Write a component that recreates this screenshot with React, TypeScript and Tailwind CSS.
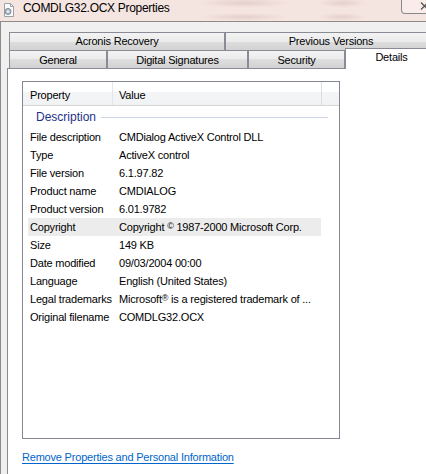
import React from "react";

const tabBg =
  "bg-[linear-gradient(to_bottom,#f3f3f3_0%,#ebebeb_50%,#dedede_50%,#d2d2d2_100%)]";

function TitleIcon() {
  return (
    <svg width="14" height="14" viewBox="0 0 14 14">
      <path d="M2.5 0.5h6l3 3v10h-9z" fill="#fbfbfb" stroke="#9aa3ad" />
      <path d="M8.5 0.5v3h3" fill="none" stroke="#9aa3ad" />
      <circle cx="6" cy="8.5" r="3" fill="#b9c3cf" stroke="#7c8794" />
      <circle cx="6" cy="8.5" r="1.1" fill="#f4f6f8" />
    </svg>
  );
}

const rows: [string, React.ReactNode][] = [
  ["File description", "CMDialog ActiveX Control DLL"],
  ["Type", "ActiveX control"],
  ["File version", "6.1.97.82"],
  ["Product name", "CMDIALOG"],
  ["Product version", "6.01.9782"],
  [
    "Copyright",
    <>
      Copyright <span className="text-[9px] align-[2px]">©</span> 1987-2000 Microsoft Corp.
    </>,
  ],
  ["Size", "149 KB"],
  ["Date modified", "09/03/2004 00:00"],
  ["Language", "English (United States)"],
  [
    "Legal trademarks",
    <>
      Microsoft<span className="text-[9px] align-[2px]">®</span> is a registered trademark of ...
    </>,
  ],
  ["Original filename", "COMDLG32.OCX"],
];

export default function App() {
  return (
    <div className="w-[426px] h-[474px] overflow-hidden bg-[#f0f0f0] text-black font-['Liberation_Sans',Arial,sans-serif] text-[11px] leading-[15px] tracking-[-0.2px]">
      {/* Title bar */}
      <div className="h-[21px] flex items-start bg-[radial-gradient(ellipse_46px_5px_at_244px_3px,#e4cfcb,transparent),radial-gradient(ellipse_46px_4px_at_244px_17px,#e4cfcb,transparent),radial-gradient(ellipse_24px_5px_at_342px_3px,#e4cfcb,transparent),radial-gradient(ellipse_24px_4px_at_342px_17px,#e4cfcb,transparent),linear-gradient(#f5e5e1,#f5e5e1)]">
        <div className="ml-[2px] mt-[3px] w-[14px] h-[14px]">
          <TitleIcon />
        </div>
        <div className="ml-[7px] mt-[1px] text-[12px] tracking-[-0.3px] text-black">
          COMDLG32.OCX Properties
        </div>
        <div className="ml-auto mr-[-6px] w-[31px] h-[14px] border border-t-0 border-[#8a8a8a] rounded-bl-[4px] bg-[#f9ece9] pl-[18px] pt-[2px]">
          <svg width="10" height="8" viewBox="0 0 10 8">
            <path d="M1 0.5L4.5 4L1 7.5M8 0.5L4.5 4L8 7.5" fill="none" stroke="#555" strokeWidth="1.3" />
          </svg>
        </div>
      </div>

      {/* Body */}
      <div className="flex h-[453px]">
        <div className="w-px bg-[#d6c8c5]" />
        <div className="flex-1 border-t border-l border-[#8f8a89] pl-[6px] pt-[10px] flex flex-col">
          {/* Tabs row 1 */}
          <div className="flex ml-[2px] h-[18px] w-[500px]">
            <div className={`w-[216px] h-[18px] border-t border-l border-r border-[#898c95] ${tabBg} flex items-start justify-center pt-[1px]`}>
              Acronis Recovery
            </div>
            <div className={`w-[212px] h-[18px] border-t border-l border-r border-[#898c95] ${tabBg} flex items-start justify-center pt-[1px]`}>
              Previous Versions
            </div>
          </div>
          {/* Tabs row 2 */}
          <div className="flex items-end ml-[2px] h-[18px] w-[500px]">
            <div className={`w-[98px] h-[18px] border-t border-l border-r border-[#898c95] ${tabBg} flex items-start justify-center pt-[2px]`}>
              General
            </div>
            <div className={`w-[141px] h-[18px] border-t border-l border-r border-[#898c95] ${tabBg} flex items-start justify-center pt-[2px]`}>
              Digital Signatures
            </div>
            <div className={`w-[97px] h-[18px] border-t border-l border-r border-[#898c95] ${tabBg} flex items-start justify-center pt-[2px]`}>
              Security
            </div>
            <div className="relative z-10 w-[93px] h-[21px] mb-[-1px] border-t border-l border-r border-[#898c95] bg-white flex items-start justify-center pt-[1px]">
              Details
            </div>
          </div>

          {/* Panel */}
          <div className="w-[440px] h-[420px] border-t border-l border-[#898c95] bg-white pl-[14px] pt-[12px]">
            <div className="w-[318px] h-[358px] border border-[#828790] bg-white flex flex-col">
              {/* Header */}
              <div className="h-[24px] shrink-0 flex border-b border-[#d5d5d5] bg-[linear-gradient(to_bottom,#ffffff_0%,#ffffff_45%,#f4f5f7_45%,#f1f2f4_100%)]">
                <div className="w-[89px] pl-[7px] pt-[6px]">Property</div>
                <div className="w-px bg-[#e3e5e8]" />
                <div className="w-[208px] pl-[6px] pt-[6px]">Value</div>
                <div className="w-px bg-[#dcdee2]" />
                <div className="flex-1" />
              </div>
              {/* Group header */}
              <div className="h-[22px] shrink-0 flex items-center pl-[13px]">
                <span className="text-[12px] tracking-normal text-[#1e3287]">Description</span>
                <div className="flex-1 ml-[5px] mr-[11px] h-px bg-[#cdd6e9]" />
              </div>
              {/* Rows */}
              <div className="pl-[5px] flex flex-col">
                {rows.map(([k, v]) => (
                  <div
                    key={k}
                    className={`w-[293px] h-[18px] flex items-center whitespace-nowrap ${k === "Copyright" ? "bg-[#ececec]" : ""}`}
                  >
                    <div className="w-[91px] pl-[2px]">{k}</div>
                    <div>{v}</div>
                  </div>
                ))}
              </div>
            </div>
            <div className="mt-[11px]">
              <span className="text-[#0066cc] underline underline-offset-[2px]">
                Remove Properties and Personal Information
              </span>
            </div>
          </div>
        </div>
      </div>
    </div>
  );
}
